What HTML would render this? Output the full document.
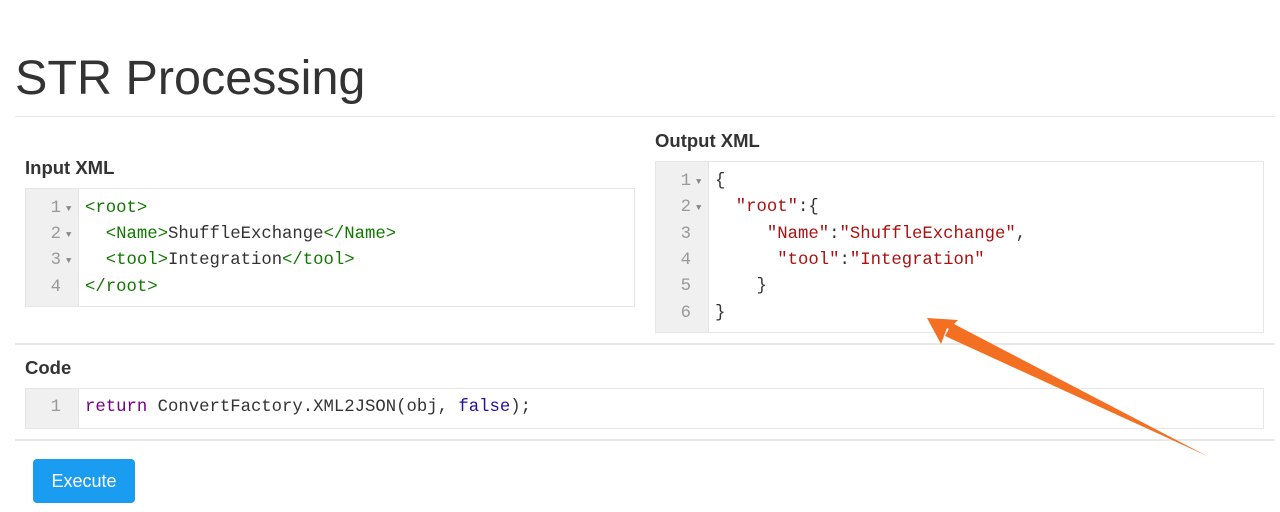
<!DOCTYPE html>
<html><head><style>
body{margin:0;background:#fff;width:1280px;height:512px;overflow:hidden;font-family:"Liberation Sans",sans-serif;color:#333;position:relative}
.abs{position:absolute}
h1{position:absolute;left:15px;top:50px;margin:0;font-size:48.5px;font-weight:normal;color:#333;line-height:56px}
.hr{position:absolute;height:2px;background:#e8e8e8;left:15px;width:1260px}
.lbl{position:absolute;font-weight:bold;font-size:18.5px;color:#333}
.ed{position:absolute;border:1px solid #e6e6e6;background:#fff;font-family:"Liberation Mono",monospace;font-size:17.3px}
.gut{position:absolute;left:0;top:0;bottom:0;width:52px;background:#f0f0f0;border-right:1px solid #e3e3e3}
.ln{position:absolute;height:26px;line-height:26px;white-space:pre}
.num{color:#999;left:0;width:35px;text-align:right}
.fold{color:#888;font-size:9px;left:40px}
.t{color:#117700}.s{color:#aa1111}.k{color:#770088}.a{color:#221199}
</style></head><body>
<h1>STR Processing</h1>
<div class="hr" style="top:116px;height:1px"></div>

<div class="lbl" style="left:25px;top:157px">Input XML</div>
<div class="ed" style="left:25px;top:188px;width:608px;height:117px">
<div class="gut"></div>
<div class="ln num" style="top:7px">1</div><div class="ln fold" style="top:7px">▼</div>
<div class="ln num" style="top:33px">2</div><div class="ln fold" style="top:33px">▼</div>
<div class="ln num" style="top:59px">3</div><div class="ln fold" style="top:59px">▼</div>
<div class="ln num" style="top:86px">4</div>
<div class="ln" style="left:59px;top:7px"><span class="t">&lt;root&gt;</span></div>
<div class="ln" style="left:59px;top:33px">  <span class="t">&lt;Name&gt;</span>ShuffleExchange<span class="t">&lt;/Name&gt;</span></div>
<div class="ln" style="left:59px;top:59px">  <span class="t">&lt;tool&gt;</span>Integration<span class="t">&lt;/tool&gt;</span></div>
<div class="ln" style="left:59px;top:86px"><span class="t">&lt;/root&gt;</span></div>
</div>

<div class="lbl" style="left:655px;top:130px">Output XML</div>
<div class="ed" style="left:655px;top:161px;width:607px;height:170px">
<div class="gut"></div>
<div class="ln num" style="top:7px">1</div><div class="ln fold" style="top:7px">▼</div>
<div class="ln num" style="top:33px">2</div><div class="ln fold" style="top:33px">▼</div>
<div class="ln num" style="top:60px">3</div>
<div class="ln num" style="top:86px">4</div>
<div class="ln num" style="top:112px">5</div>
<div class="ln num" style="top:139px">6</div>
<div class="ln" style="left:59px;top:7px">{</div>
<div class="ln" style="left:59px;top:33px">  <span class="s">"root"</span>:{</div>
<div class="ln" style="left:59px;top:60px">     <span class="s">"Name"</span>:<span class="s">"ShuffleExchange"</span>,</div>
<div class="ln" style="left:59px;top:86px">      <span class="s">"tool"</span>:<span class="s">"Integration"</span></div>
<div class="ln" style="left:59px;top:112px">    }</div>
<div class="ln" style="left:59px;top:139px">}</div>
</div>

<div class="hr" style="top:343px"></div>
<div class="lbl" style="left:25px;top:357px">Code</div>
<div class="ed" style="left:25px;top:388px;width:1237px;height:39px">
<div class="gut"></div>
<div class="ln num" style="top:6px">1</div>
<div class="ln" style="left:59px;top:6px"><span class="k">return</span> ConvertFactory.XML2JSON(obj, <span class="a">false</span>);</div>
</div>
<div class="hr" style="top:439px"></div>

<div class="abs" style="left:33px;top:459px;width:102px;height:44px;background:#1a9cf0;border-radius:4px;color:#fff;font-size:18px;line-height:44px;text-align:center">Execute</div>

<svg class="abs" style="left:0;top:0" width="1280" height="512">
<polygon points="1207,456 947,328 941,344 927,318 958,320 952,326" fill="#f36f21"/>
<polygon points="1207,456 952,323 945,336" fill="#f36f21"/>
</svg>
</body></html>
